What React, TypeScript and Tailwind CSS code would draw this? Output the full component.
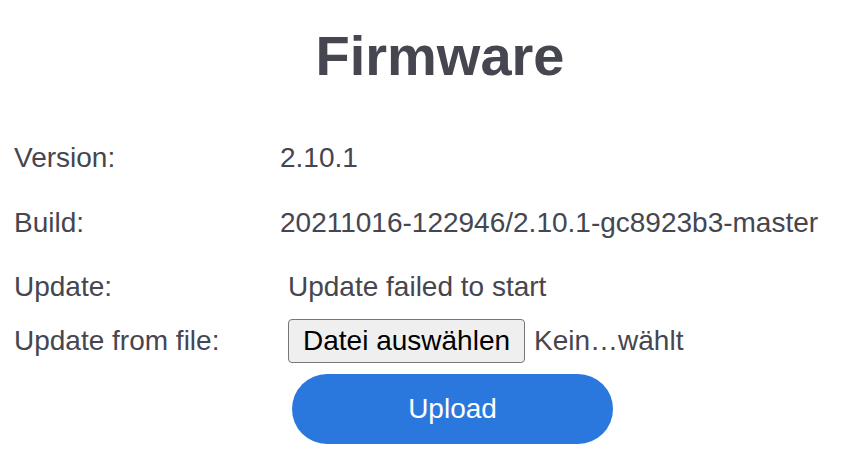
import React from 'react';

const rows = [
  { label: 'Version:', value: '2.10.1' },
  { label: 'Build:', value: '20211016-122946/2.10.1-gc8923b3-master' },
];

const App: React.FC = () => {
  return (
    <div className="w-[848px] h-[452px] bg-white text-[#45464f] font-['Liberation_Sans',Arial,sans-serif] overflow-hidden">
      <h1 className="mt-[24px] pl-[32px] text-center text-[56px] font-bold leading-[64px]">Firmware</h1>

      <div className="mt-[37px] text-[28px] leading-[32px]">
        {rows.map((r) => (
          <div key={r.label} className="flex items-center h-[65px]">
            <div className="pl-[14px] w-[280px]">{r.label}</div>
            <div>{r.value}</div>
          </div>
        ))}

        <div className="flex items-center h-[64px]">
          <div className="pl-[14px] w-[280px]">Update:</div>
          <div className="ml-[8px]">Update failed to start</div>
        </div>

        <div className="flex items-center h-[44px]">
          <div className="pl-[14px] w-[280px]">Update from file:</div>
          <div className="ml-[8px] flex items-center">
            <button className="h-[44px] px-[14px] bg-[#efefef] border border-[#767676] rounded-[4px] text-black">
              Datei auswählen
            </button>
            <span className="ml-[9px]">Kein…wählt</span>
          </div>
        </div>

        <button className="mt-[11px] ml-[292px] w-[321px] h-[70px] rounded-full bg-[#2a78de] text-white text-[28px]">
          Upload
        </button>
      </div>
    </div>
  );
};

export default App;
